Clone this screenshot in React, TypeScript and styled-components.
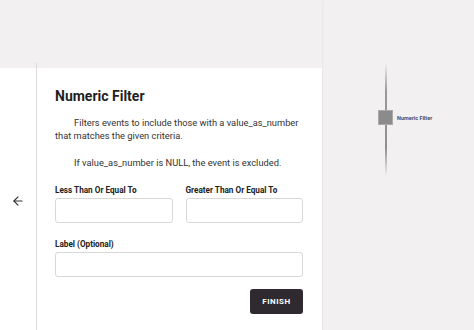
import React from 'react';
import styled, { createGlobalStyle } from 'styled-components';

const GlobalStyle = createGlobalStyle`
  html, body {
    margin: 0;
    padding: 0;
    background: #f2f0f0;
    font-family: Roboto, "Liberation Sans", sans-serif;
  }
`;

const Screen = styled.div`
  display: flex;
  width: 474px;
  height: 330px;
  overflow: hidden;
  background: #f2f0f0;
`;

const Main = styled.div`
  display: flex;
  flex-direction: column;
  width: 322px;
  flex-shrink: 0;
`;

const TopBand = styled.div`
  height: 68px;
  flex-shrink: 0;
  background: #f2f0f0;
`;

const Body = styled.div`
  display: flex;
  flex: 1;
`;

const Rail = styled.div`
  width: 37px;
  flex-shrink: 0;
  background: #fff;
  border-right: 1px solid #dcdcdc;
  display: flex;
  justify-content: center;
  padding-top: 126px;
  box-sizing: border-box;
  position: relative;
  &::before {
    content: '';
    position: absolute;
    right: -1px;
    top: -5px;
    height: 5px;
    width: 1px;
    background: #dcdcdc;
  }
`;

const BackArrow = styled.svg`
  width: 14px;
  height: 14px;
  margin-left: -1px;
`;

const Card = styled.div`
  flex: 1;
  min-width: 0;
  background: #fff;
  padding: 20px 19px 0 18px;
  color: #222;
`;

const Title = styled.h1`
  margin: 0 0 12px;
  font-size: 14px;
  font-weight: 700;
  line-height: 16px;
  color: #1f1f1f;
`;

const Para = styled.p`
  margin: 0 0 14px;
  font-size: 9.3px;
  line-height: 13px;
  text-indent: 19px;
  color: #333;
`;

const Row = styled.div`
  display: flex;
  gap: 13px;
  margin-top: 16px;
`;

const Field = styled.div`
  display: flex;
  flex-direction: column;
  flex: 1;
  min-width: 0;
`;

const Label = styled.label`
  font-size: 8.2px;
  font-weight: 700;
  color: #222;
  line-height: 11px;
  margin-bottom: 2px;
`;

const Input = styled.input`
  width: 100%;
  min-width: 0;
  height: 25px;
  box-sizing: border-box;
  border: 1px solid #d8d8d8;
  border-radius: 3px;
  background: #fff;
  outline: none;
  font-size: 10px;
`;

const Actions = styled.div`
  display: flex;
  justify-content: flex-end;
  margin-top: 12px;
`;

const FinishButton = styled.button`
  width: 53px;
  height: 25px;
  background: #2e2a2f;
  color: #fff;
  border: none;
  border-radius: 3px;
  font-family: Roboto, "Liberation Sans", sans-serif;
  font-size: 8px;
  font-weight: 700;
  letter-spacing: 0.5px;
`;

const Panel = styled.div`
  flex: 1;
  position: relative;
  background: #f2f0f0;
  box-shadow: inset 2px 0 3px -2px rgba(0, 0, 0, 0.08);
`;

const Timeline = styled.div`
  position: absolute;
  left: 63px;
  top: 63px;
  width: 2px;
  height: 113px;
  background: linear-gradient(
    to bottom,
    rgba(150, 150, 150, 0) 0%,
    #9a9a9a 25%,
    #8f8f8f 75%,
    rgba(150, 150, 150, 0) 100%
  );
`;

const Node = styled.div`
  position: absolute;
  left: 56px;
  top: 110px;
  display: flex;
  align-items: center;
  gap: 4px;
`;

const NodeBox = styled.div`
  width: 15px;
  height: 15px;
  background: #8b8b8b;
  border: 1px solid #aaa;
  box-sizing: border-box;
`;

const NodeLabel = styled.span`
  font-size: 5.5px;
  font-weight: 700;
  color: #4b4a6e;
  white-space: nowrap;
`;

const App: React.FC = () => {
  return (
    <>
      <GlobalStyle />
      <Screen>
        <Main>
          <TopBand />
          <Body>
            <Rail>
              <BackArrow viewBox="0 0 24 24" fill="none" stroke="#333" strokeWidth="2" strokeLinecap="round" strokeLinejoin="round">
                <path d="M19 12H5" />
                <path d="M12 19l-7-7 7-7" />
              </BackArrow>
            </Rail>
            <Card>
              <Title>Numeric Filter</Title>
              <Para>
                Filters events to include those with a value_as_number that matches the given criteria.
              </Para>
              <Para>If value_as_number is NULL, the event is excluded.</Para>
              <Row>
                <Field>
                  <Label>Less Than Or Equal To</Label>
                  <Input />
                </Field>
                <Field>
                  <Label>Greater Than Or Equal To</Label>
                  <Input />
                </Field>
              </Row>
              <Row>
                <Field>
                  <Label>Label (Optional)</Label>
                  <Input />
                </Field>
              </Row>
              <Actions>
                <FinishButton>FINISH</FinishButton>
              </Actions>
            </Card>
          </Body>
        </Main>
        <Panel>
          <Timeline />
          <Node>
            <NodeBox />
            <NodeLabel>Numeric Filter</NodeLabel>
          </Node>
        </Panel>
      </Screen>
    </>
  );
};

export default App;
